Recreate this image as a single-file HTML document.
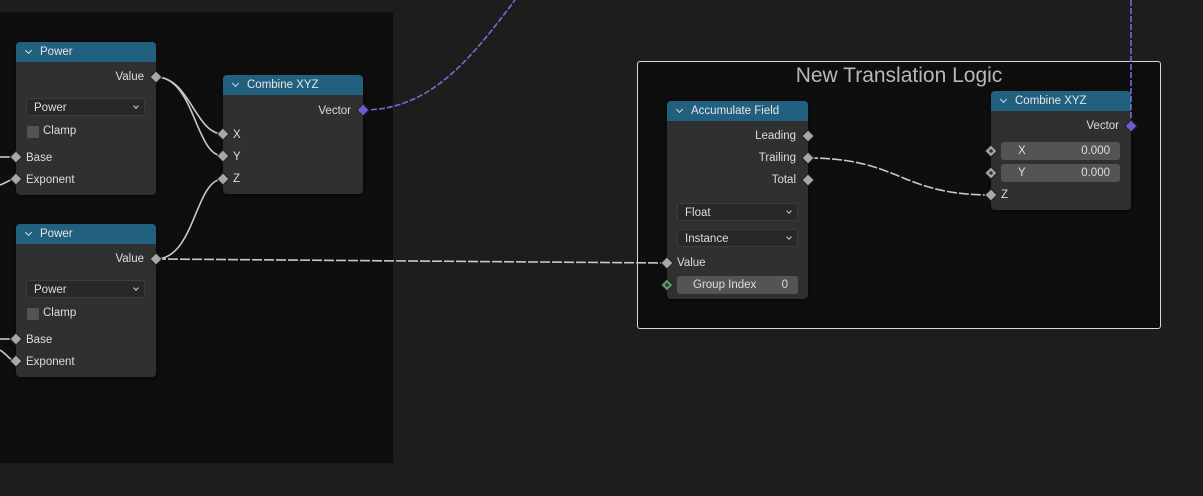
<!DOCTYPE html><html><head><style>
body{margin:0;width:1203px;height:496px;background:#1d1d1d;overflow:hidden;position:relative;font-family:"Liberation Sans","DejaVu Sans",sans-serif;font-size:11.5px;color:#ddd}
.a{position:absolute}
.node{position:absolute;background:#303030;border-radius:4px;box-shadow:0 1px 3px rgba(0,0,0,.6)}
.hd{height:20px;background:#22607f;border-radius:4px 4px 0 0;line-height:21px;padding-left:24px;color:#e6e6e6;position:relative}
.hd:before{content:"";position:absolute;left:10px;top:6px;width:4px;height:4px;border-right:1px solid #ddd;border-bottom:1px solid #ddd;transform:rotate(45deg)}
.r{position:absolute;right:12px;margin-top:1px}
.l{position:absolute;left:10px;margin-top:1px}
.dd{position:absolute;background:#282828;border:1px solid #3c3c3c;border-radius:3px;height:18px;line-height:18px;padding-left:7px;box-sizing:border-box}
.dd:after{content:"";position:absolute;right:6px;top:5px;width:3px;height:3px;border-right:1px solid #ccc;border-bottom:1px solid #ccc;transform:rotate(45deg)}
.fld{position:absolute;background:#545454;border-radius:3px;height:18px;line-height:18px;box-sizing:border-box;padding:0 10px}
.cb{position:absolute;width:12px;height:12px;background:#545454;border-radius:2px}
</style></head><body>
<div class="a" style="left:0;top:12px;width:393px;height:451px;background:#0e0e0e"></div>
<div class="a" style="left:637px;top:61px;width:522px;height:266px;background:#0e0e0e;border:1px solid #d8d8d8;border-radius:3px"></div>
<div class="a" style="left:637px;top:64px;width:524px;text-align:center;font-size:21px;color:#b8b8b8">New Translation Logic</div>

<div class="node" style="left:16px;top:42px;width:140px;height:153px"><div class="hd">Power</div>
<div class="r" style="top:28px">Value</div>
<div class="dd" style="left:10px;top:56px;width:119px">Power</div>
<div class="cb" style="left:11px;top:84px"></div><div class="a" style="left:27px;top:83px">Clamp</div>
<div class="l" style="top:109px">Base</div><div class="l" style="top:131px">Exponent</div></div>

<div class="node" style="left:16px;top:224px;width:140px;height:153px"><div class="hd">Power</div>
<div class="r" style="top:28px">Value</div>
<div class="dd" style="left:10px;top:56px;width:119px">Power</div>
<div class="cb" style="left:11px;top:84px"></div><div class="a" style="left:27px;top:83px">Clamp</div>
<div class="l" style="top:109px">Base</div><div class="l" style="top:131px">Exponent</div></div>

<div class="node" style="left:223px;top:75px;width:140px;height:119px"><div class="hd">Combine XYZ</div>
<div class="r" style="top:29px">Vector</div>
<div class="l" style="top:53px">X</div><div class="l" style="top:75px">Y</div><div class="l" style="top:97px">Z</div></div>

<div class="node" style="left:667px;top:101px;width:141px;height:198px"><div class="hd">Accumulate Field</div>
<div class="r" style="top:28px">Leading</div><div class="r" style="top:50px">Trailing</div><div class="r" style="top:72px">Total</div>
<div class="dd" style="left:10px;top:102px;width:121px">Float</div>
<div class="dd" style="left:10px;top:128px;width:121px">Instance</div>
<div class="l" style="top:155px">Value</div>
<div class="fld" style="left:10px;top:175px;width:121px;padding-left:16px">Group Index<span style="float:right">0</span></div></div>

<div class="node" style="left:991px;top:91px;width:140px;height:119px"><div class="hd">Combine XYZ</div>
<div class="r" style="top:28px">Vector</div>
<div class="fld" style="left:10px;top:51px;width:119px;padding-left:17px">X<span style="float:right">0.000</span></div>
<div class="fld" style="left:10px;top:73px;width:119px;padding-left:17px">Y<span style="float:right">0.000</span></div>
<div class="l" style="top:97px">Z</div></div>

<svg class="a" style="left:0;top:0" width="1203" height="496">
<g fill="none" stroke-width="1.6">
<path d="M363 110 C430 110 470 60 515 0" stroke="#7a6ad0" stroke-dasharray="6 2"/>
<path d="M1131 126 L1131 0" stroke="#7a6ad0" stroke-dasharray="6 2"/>
<g stroke="#c8c8c8">
<path d="M156 77 C190 77 195 134 223 134"/>
<path d="M156 77 C195 77 195 156 223 156"/>
<path d="M156 259 C195 259 195 179 223 179"/>
<path d="M156 259 L667 263" stroke-dasharray="10 2"/>
<path d="M808 158 C900 158 900 195 991 195" stroke-dasharray="10 2"/>
<path d="M0 157 L16 157"/><path d="M0 185 C8 182 10 179 16 179"/>
<path d="M0 339 L16 339"/><path d="M0 350 C8 355 10 361 16 361"/>
</g></g>
<g fill="#a8a8a8" stroke="#222" stroke-width="1">
<path d="M156 71l6 6-6 6-6-6z"/><path d="M16 151l6 6-6 6-6-6z"/><path d="M16 173l6 6-6 6-6-6z"/>
<path d="M156 253l6 6-6 6-6-6z"/><path d="M16 333l6 6-6 6-6-6z"/><path d="M16 355l6 6-6 6-6-6z"/>
<path d="M223 128l6 6-6 6-6-6z"/><path d="M223 150l6 6-6 6-6-6z"/><path d="M223 173l6 6-6 6-6-6z"/>
<path d="M808 130l6 6-6 6-6-6z"/><path d="M808 152l6 6-6 6-6-6z"/><path d="M808 174l6 6-6 6-6-6z"/>
<path d="M667 257l6 6-6 6-6-6z"/>
<path d="M991 145l6 6-6 6-6-6z"/><path d="M991 167l6 6-6 6-6-6z"/><path d="M991 189l6 6-6 6-6-6z"/>
<path d="M363 104l6 6-6 6-6-6z" fill="#6a5fd0"/><path d="M1131 120l6 6-6 6-6-6z" fill="#6a5fd0"/>
<path d="M667 279l6 6-6 6-6-6z" fill="#5a9a6a"/>
</g>
<circle cx="991" cy="151" r="1.8" fill="#333"/><circle cx="991" cy="173" r="1.8" fill="#333"/><circle cx="667" cy="285" r="1.8" fill="#333"/>
</svg>
</body></html>
